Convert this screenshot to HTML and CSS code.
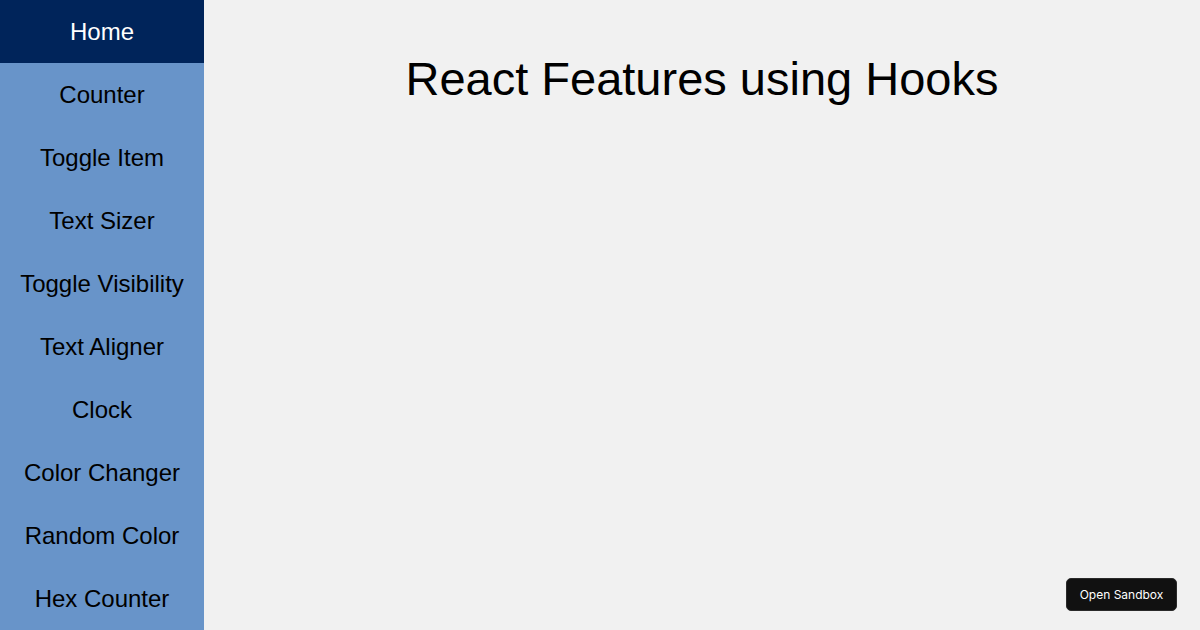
FILE: index.html
```html
<!DOCTYPE html>
<html>
<head>
<meta charset="utf-8">
<link rel="stylesheet" href="styles.css">
</head>
<body>
<div class="app">
  <nav class="sidebar">
    <a class="nav-item active">Home</a>
    <a class="nav-item">Counter</a>
    <a class="nav-item">Toggle Item</a>
    <a class="nav-item">Text Sizer</a>
    <a class="nav-item">Toggle Visibility</a>
    <a class="nav-item">Text Aligner</a>
    <a class="nav-item">Clock</a>
    <a class="nav-item">Color Changer</a>
    <a class="nav-item">Random Color</a>
    <a class="nav-item">Hex Counter</a>
  </nav>
  <main class="content">
    <h1 class="title">React Features using Hooks</h1>
  </main>
</div>
<button class="sandbox-btn">Open Sandbox</button>
</body>
</html>
```
FILE: styles.css
```css
html, body {
  margin: 0;
  padding: 0;
  height: 100%;
}
body {
  font-family: "Liberation Sans", Arial, sans-serif;
  background: #f1f1f1;
  overflow: hidden;
}
.app {
  display: flex;
  height: 630px;
}
.sidebar {
  width: 204px;
  flex: 0 0 204px;
  background: #6894c9;
  display: flex;
  flex-direction: column;
}
.nav-item {
  height: 63px;
  flex: 0 0 63px;
  display: flex;
  align-items: center;
  justify-content: center;
  font-size: 24px;
  color: #000;
  text-decoration: none;
}
.nav-item.active {
  background: #00245a;
  color: #fff;
}
.content {
  flex: 1;
  display: flex;
  flex-direction: column;
  align-items: center;
}
.title {
  font-size: 47px;
  font-weight: normal;
  margin: 51px 0 0;
  color: #000;
}
.sandbox-btn {
  position: fixed;
  right: 23px;
  bottom: 19px;
  width: 111px;
  height: 33px;
  background: #111;
  color: #fff;
  border: 1px solid #2a2a2a;
  border-radius: 5px;
  font-family: Inter, "Liberation Sans", sans-serif;
  font-size: 12px;
  padding: 0;
}
```
